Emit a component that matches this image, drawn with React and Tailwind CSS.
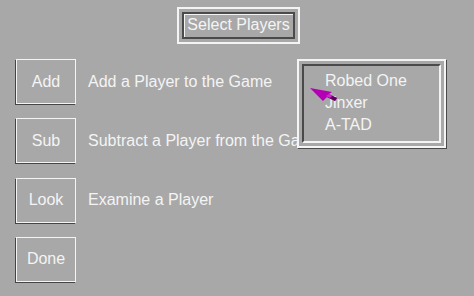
import React from 'react';

// Old-school game dialog: pick who plays
const ACTIONS = [
  { key: 'Add', text: 'Add a Player to the Game' },
  { key: 'Sub', text: 'Subtract a Player from the Game' },
  { key: 'Look', text: 'Examine a Player' },
  { key: 'Done', text: '' },
];

const PLAYERS = ['Robed One', 'Jinxer', 'A-TAD'];

function FlatButton({ label }) {
  return (
    <button
      type="button"
      className="ml-[16px] w-[60px] h-[45px] shrink-0 border border-[#f4f4f4] shadow-[-1px_1px_0_#454545] text-[16px] text-[#f4f4f4] leading-none"
    >
      {label}
    </button>
  );
}

export default function App() {
  return (
    <div
      className="relative w-[474px] h-[296px] overflow-hidden bg-[#a8a8a8] text-[#f4f4f4]"
      style={{ fontFamily: '"Liberation Sans", Arial, sans-serif' }}
    >
      {/* ── Title ─────────────────────────────── */}
      <div className="flex justify-center pl-[3px] pt-[7px]">
        <div className="w-[123px] h-[37px] border-2 border-[#f4f4f4] p-[3px]">
          <div className="h-full flex items-center justify-center border-2 border-[#4a4a4a] shadow-[inset_1px_1px_0_#f4f4f4] text-[16px] leading-none pb-[2px]">
            Select Players
          </div>
        </div>
      </div>

      {/* ── Action rows ───────────────────────── */}
      <div className="flex flex-col gap-[14.3px] mt-[15px]">
        {ACTIONS.map((a) => (
          <div key={a.key} className="flex items-center">
            <FlatButton label={a.key} />
            <span className="ml-[12px] text-[16px] whitespace-nowrap">{a.text}</span>
          </div>
        ))}
      </div>

      {/* ── Player list popup ─────────────────── */}
      <div className="absolute left-[297px] top-[59px] w-[149px] h-[89px] bg-[#a8a8a8] border-2 border-[#f4f4f4] shadow-[1px_1px_0_#4a4a4a] p-[3px]">
        <div className="h-full border-2 border-t-[#4a4a4a] border-l-[#4a4a4a] border-b-[#f4f4f4] border-r-[#f4f4f4] pt-[4px] pl-[21px]">
          {PLAYERS.map((p) => (
            <div key={p} className="text-[16px] leading-[22px]">
              {p}
            </div>
          ))}
        </div>
      </div>

      {/* mouse pointer */}
      <svg className="absolute left-[309px] top-[86px]" width="30" height="18" viewBox="0 0 30 18">
        <polygon points="1,2 23,6 20,8 28,12 26,15 18,11 14,15" fill="#b400b4" />
        <polygon points="18,11 26,15 28,12 23,10" fill="#5a005a" />
        <polygon points="20,8 23,10 21,12 17,10" fill="#d424d4" />
      </svg>
    </div>
  );
}
